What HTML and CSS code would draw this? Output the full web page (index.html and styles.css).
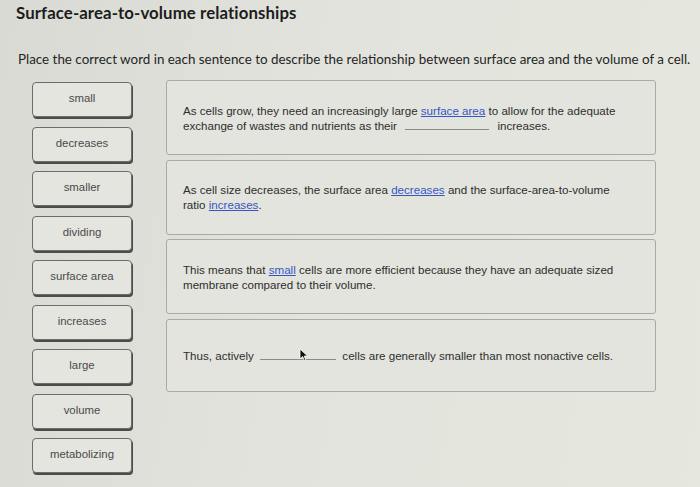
FILE: index.html
```html
<!DOCTYPE html>
<html>
<head>
    <title>Surface-area-to-volume relationships</title>
    <meta name="viewport" content="width=device-width, initial-scale=1">
    <link rel="stylesheet" href="styles.css">
</head>
<body>
    <div class="page">
        <h1>Surface-area-to-volume relationships</h1>
        <p class="prompt">Place the correct word in each sentence to describe the relationship between surface area and the volume of a cell.</p>

        <div class="board">
            <!-- Word bank -->
            <div class="bank">
                <div class="tile">small</div>
                <div class="tile">decreases</div>
                <div class="tile">smaller</div>
                <div class="tile">dividing</div>
                <div class="tile">surface area</div>
                <div class="tile">increases</div>
                <div class="tile">large</div>
                <div class="tile">volume</div>
                <div class="tile">metabolizing</div>
            </div>

            <!-- Sentences with drop targets -->
            <div class="sentences">
                <div class="sentence">
                    <p>As cells grow, they need an increasingly large <span class="filled">surface area</span> to allow for the adequate exchange of wastes and nutrients as their <span class="blank wide"></span> increases.</p>
                </div>
                <div class="sentence">
                    <p>As cell size decreases, the surface area <span class="filled">decreases</span> and the surface-area-to-volume ratio <span class="filled">increases</span>.</p>
                </div>
                <div class="sentence">
                    <p>This means that <span class="filled">small</span> cells are more efficient because they have an adequate sized membrane compared to their volume.</p>
                </div>
                <div class="sentence last">
                    <p>Thus, actively <span class="blank"></span> cells are generally smaller than most nonactive cells.</p>
                    <svg class="pointer" width="10" height="14" viewBox="0 0 10 14">
                        <path d="M1 1 L1 11 L3.6 8.6 L5.4 12.6 L6.8 12 L5.1 8.1 L8.6 8.1 Z" fill="#111" stroke="#fff" stroke-width="0.8"/>
                    </svg>
                </div>
            </div>
        </div>
    </div>
</body>
</html>
```

FILE: styles.css
```css
* { margin: 0; padding: 0; box-sizing: border-box; }
html, body { height: 100%; overflow: hidden; }
body { background: linear-gradient(100deg, #d9dad3 0%, #e2e3dc 45%, #e6e8df 100%); color: #2a2a2a; }
.page { padding: 3px 0 0 16px; }
h1 { font: bold 16.8px Lato, "Liberation Sans", sans-serif; color: #1c1c1c; letter-spacing: 0.1px; line-height: 20px; }
.prompt { font: 13.4px Lato, "Liberation Sans", sans-serif; color: #252525; margin: 28px 0 0 2px; line-height: 16px; }
.board { display: flex; gap: 34px; margin-top: 8px; padding-left: 16px; }
.bank { display: flex; flex-direction: column; gap: 9.5px; padding-top: 7px; width: 100px; }
.tile { height: 35px; border: 1px solid #6c6c6a; border-radius: 4px; box-shadow: 1px 2px 0 #4c4c4a; background: #e4e5df; display: flex; align-items: center; justify-content: center; font: 11.4px "Liberation Sans", Arial, sans-serif; color: #4a4a4a; padding-bottom: 3px; }
.sentences { display: flex; flex-direction: column; gap: 4.5px; width: 490px; padding-top: 5px; }
.sentence { position: relative; height: 75px; border: 1px solid #a9aaa4; border-radius: 3px; background: #e3e4dd; display: flex; align-items: center; padding: 0 36px 0 16px; }
.sentence p { font: 11.6px "Liberation Sans", Arial, sans-serif; color: #2e2e2e; line-height: 15px; }
.filled { color: #3556c4; text-decoration: underline; }
.blank { display: inline-block; width: 76px; height: 10px; border-bottom: 1px solid #8a8a86; margin: 0 3px; }
.blank.wide { width: 84px; margin: 0 5px; }
.last { height: 73px; }
.pointer { position: absolute; left: 132px; top: 28px; }
```
